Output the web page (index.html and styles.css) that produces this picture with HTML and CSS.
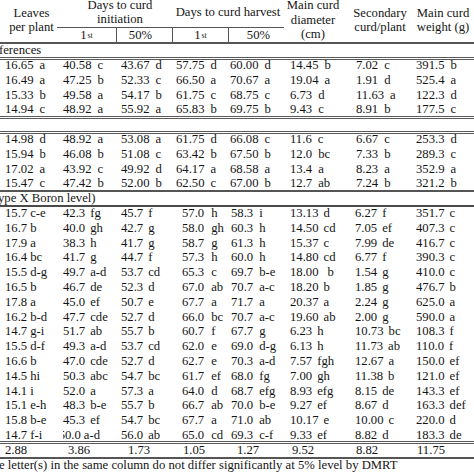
FILE: index.html
```html
<!DOCTYPE html>
<html>
<head>
<meta charset="utf-8">
<title>Table</title>
<link rel="stylesheet" href="styles.css">
</head>
<body>
<div class="page">
  <div class="head">
    <div class="h h-leaves">Leaves<br>per plant</div>
    <div class="h h-init">Days to curd<br>initiation</div>
    <div class="h h-harv">Days to curd harvest</div>
    <div class="h h-diam">Main curd<br>diameter<br>(cm)</div>
    <div class="h h-sec">Secondary<br>curd/plant</div>
    <div class="h h-wt">Main curd<br>weight (g)</div>
    <div class="h sub s-a">1<sup>st</sup></div>
    <div class="h sub s-b">50%</div>
    <div class="h sub s-c">1<sup>st</sup></div>
    <div class="h sub s-d">50%</div>
  </div>
  <div class="rule single"></div>
  <div class="label lab1">ferences</div>
  <div class="rule dbl"></div>

  <div class="row s1"><div>16.65<span class="l">a</span></div><div>40.58<span class="l">c</span></div><div>43.67<span class="l">d</span></div><div>57.75<span class="l">d</span></div><div>60.00<span class="l">d</span></div><div>14.45<span class="l">b</span></div><div>7.02<span class="l">c</span></div><div>391.5<span class="l">b</span></div></div>
  <div class="row s1"><div>16.49<span class="l">a</span></div><div>47.25<span class="l">b</span></div><div>52.33<span class="l">c</span></div><div>66.50<span class="l">a</span></div><div>70.67<span class="l">a</span></div><div>19.04<span class="l">a</span></div><div>1.91<span class="l">d</span></div><div>525.4<span class="l">a</span></div></div>
  <div class="row s1"><div>15.33<span class="l">b</span></div><div>49.58<span class="l">a</span></div><div>54.17<span class="l">b</span></div><div>61.75<span class="l">c</span></div><div>68.75<span class="l">c</span></div><div>6.73<span class="l">d</span></div><div>11.63<span class="l">a</span></div><div>122.3<span class="l">d</span></div></div>
  <div class="row s1"><div>14.94<span class="l">c</span></div><div>48.92<span class="l">a</span></div><div>55.92<span class="l">a</span></div><div>65.83<span class="l">b</span></div><div>69.75<span class="l">b</span></div><div>9.43<span class="l">c</span></div><div>8.91<span class="l">b</span></div><div>177.5<span class="l">c</span></div></div>
  <div class="rule dbl"></div>
  <div class="label"></div>
  <div class="rule dbl"></div>

  <div class="row s1"><div>14.98<span class="l">d</span></div><div>48.92<span class="l">a</span></div><div>53.08<span class="l">a</span></div><div>61.75<span class="l">d</span></div><div>66.08<span class="l">c</span></div><div>11.6<span class="l">c</span></div><div>6.67<span class="l">c</span></div><div>253.3<span class="l">d</span></div></div>
  <div class="row s1"><div>15.94<span class="l">b</span></div><div>46.08<span class="l">b</span></div><div>51.08<span class="l">c</span></div><div>63.42<span class="l">b</span></div><div>67.50<span class="l">b</span></div><div>12.0<span class="l">bc</span></div><div>7.33<span class="l">b</span></div><div>289.3<span class="l">c</span></div></div>
  <div class="row s1"><div>17.02<span class="l">a</span></div><div>43.92<span class="l">c</span></div><div>49.92<span class="l">d</span></div><div>64.17<span class="l">a</span></div><div>68.58<span class="l">a</span></div><div>13.4<span class="l">a</span></div><div>8.23<span class="l">a</span></div><div>352.9<span class="l">a</span></div></div>
  <div class="row s1"><div>15.47<span class="l">c</span></div><div>47.42<span class="l">b</span></div><div>52.00<span class="l">b</span></div><div>62.50<span class="l">c</span></div><div>67.00<span class="l">b</span></div><div>12.7<span class="l">ab</span></div><div>7.24<span class="l">b</span></div><div>321.2<span class="l">b</span></div></div>
  <div class="rule single"></div>
  <div class="label lab2">ype X Boron level)</div>
  <div class="rule single thin"></div>

  <div class="row s3"><div>15.7<span class="l">c-e</span></div><div>42.3<span class="l">fg</span></div><div>45.7<span class="l">f</span></div><div>57.0<span class="l">h</span></div><div>58.3<span class="l">i</span></div><div>13.13<span class="l">d</span></div><div>6.27<span class="l">f</span></div><div>351.7<span class="l">c</span></div></div>
  <div class="row s3"><div>16.7<span class="l">b</span></div><div>40.0<span class="l">gh</span></div><div>42.7<span class="l">g</span></div><div>58.0<span class="l">gh</span></div><div>60.3<span class="l">h</span></div><div>14.50<span class="l">cd</span></div><div>7.05<span class="l">ef</span></div><div>407.3<span class="l">c</span></div></div>
  <div class="row s3"><div>17.9<span class="l">a</span></div><div>38.3<span class="l">h</span></div><div>41.7<span class="l">g</span></div><div>58.7<span class="l">g</span></div><div>61.3<span class="l">h</span></div><div>15.37<span class="l">c</span></div><div>7.99<span class="l">de</span></div><div>416.7<span class="l">c</span></div></div>
  <div class="row s3"><div>16.4<span class="l">bc</span></div><div>41.7<span class="l">g</span></div><div>44.7<span class="l">f</span></div><div>57.3<span class="l">h</span></div><div>60.0<span class="l">h</span></div><div>14.80<span class="l">cd</span></div><div>6.77<span class="l">f</span></div><div>390.3<span class="l">c</span></div></div>
  <div class="row s3"><div>15.5<span class="l">d-g</span></div><div>49.7<span class="l">a-d</span></div><div>53.7<span class="l">cd</span></div><div>65.3<span class="l">c</span></div><div>69.7<span class="l">b-e</span></div><div>18.00<span class="l wide">b</span></div><div>1.54<span class="l">g</span></div><div>410.0<span class="l">c</span></div></div>
  <div class="row s3"><div>16.5<span class="l">b</span></div><div>46.7<span class="l">de</span></div><div>52.3<span class="l">d</span></div><div>67.0<span class="l">ab</span></div><div>70.7<span class="l">a-c</span></div><div>18.20<span class="l">b</span></div><div>1.85<span class="l">g</span></div><div>476.7<span class="l">b</span></div></div>
  <div class="row s3"><div>17.8<span class="l">a</span></div><div>45.0<span class="l">ef</span></div><div>50.7<span class="l">e</span></div><div>67.7<span class="l">a</span></div><div>71.7<span class="l">a</span></div><div>20.37<span class="l">a</span></div><div>2.24<span class="l">g</span></div><div>625.0<span class="l">a</span></div></div>
  <div class="row s3"><div>16.2<span class="l">b-d</span></div><div>47.7<span class="l">cde</span></div><div>52.7<span class="l">d</span></div><div>66.0<span class="l">bc</span></div><div>70.7<span class="l">a-c</span></div><div>19.60<span class="l">ab</span></div><div>2.00<span class="l">g</span></div><div>590.0<span class="l">a</span></div></div>
  <div class="row s3"><div>14.7<span class="l">g-i</span></div><div>51.7<span class="l">ab</span></div><div>55.7<span class="l">b</span></div><div>60.7<span class="l">f</span></div><div>67.7<span class="l">g</span></div><div>6.23<span class="l">h</span></div><div>10.73<span class="l">bc</span></div><div>108.3<span class="l">f</span></div></div>
  <div class="row s3"><div>15.5<span class="l">d-f</span></div><div>49.3<span class="l">a-d</span></div><div>53.7<span class="l">cd</span></div><div>62.0<span class="l">e</span></div><div>69.0<span class="l">d-g</span></div><div>6.13<span class="l">h</span></div><div>11.73<span class="l">ab</span></div><div>110.0<span class="l">f</span></div></div>
  <div class="row s3"><div>16.6<span class="l">b</span></div><div>47.0<span class="l">cde</span></div><div>52.7<span class="l">d</span></div><div>62.7<span class="l">e</span></div><div>70.3<span class="l">a-d</span></div><div>7.57<span class="l">fgh</span></div><div>12.67<span class="l">a</span></div><div>150.0<span class="l">ef</span></div></div>
  <div class="row s3"><div>14.5<span class="l">hi</span></div><div>50.3<span class="l">abc</span></div><div>54.7<span class="l">bc</span></div><div>61.7<span class="l">ef</span></div><div>68.0<span class="l">fg</span></div><div>7.00<span class="l">gh</span></div><div>11.38<span class="l">b</span></div><div>121.0<span class="l">ef</span></div></div>
  <div class="row s3"><div>14.1<span class="l">i</span></div><div>52.0<span class="l">a</span></div><div>57.3<span class="l">a</span></div><div>64.0<span class="l">d</span></div><div>68.7<span class="l">efg</span></div><div>8.93<span class="l">efg</span></div><div>8.15<span class="l">de</span></div><div>143.3<span class="l">ef</span></div></div>
  <div class="row s3"><div>15.1<span class="l">e-h</span></div><div>48.3<span class="l">b-e</span></div><div>55.7<span class="l">b</span></div><div>66.7<span class="l">ab</span></div><div>70.0<span class="l">b-e</span></div><div>9.27<span class="l">ef</span></div><div>8.67<span class="l">d</span></div><div>163.3<span class="l">def</span></div></div>
  <div class="row s3"><div>15.8<span class="l">b-e</span></div><div>45.3<span class="l">ef</span></div><div>54.7<span class="l">bc</span></div><div>67.7<span class="l">a</span></div><div>71.0<span class="l">ab</span></div><div>10.17<span class="l">e</span></div><div>10.00<span class="l">c</span></div><div>220.0<span class="l">d</span></div></div>
  <div class="row s3"><div>14.7<span class="l">f-i</span></div><div><span class="clip">5</span>0.0<span class="l tight">a-d</span></div><div>56.0<span class="l">ab</span></div><div>65.0<span class="l">cd</span></div><div>69.3<span class="l">c-f</span></div><div>9.33<span class="l">ef</span></div><div>8.82<span class="l">d</span></div><div>183.3<span class="l">de</span></div></div>
  <div class="rule dbl"></div>

  <div class="row lsd"><div>2.88</div><div>3.86</div><div>1.73</div><div>1.05</div><div>1.27</div><div>9.52</div><div>8.82</div><div>11.75</div></div>
  <div class="rule single"></div>
  <div class="note">e letter(s) in the same column do not differ significantly at 5% level by DMRT</div>
</div>
</body>
</html>
```

FILE: styles.css
```css
html, body {
  margin: 0;
  padding: 0;
  background: #ffffff;
  overflow: hidden;
}

.page {
  --cols: 57px 59px 56px 56px 56px 66px 60px 64px;
  width: 474px;
  margin-top: -3px;
  font-family: "Liberation Serif", "Times New Roman", serif;
  font-size: 12.7px;
  color: #151515;
}

/* header */
.head {
  display: grid;
  grid-template-columns: var(--cols);
  grid-template-rows: 31px 15.3px;
}

.h {
  display: flex;
  align-items: center;
  justify-content: center;
  text-align: center;
  line-height: 14.5px;
  box-sizing: border-box;
  white-space: nowrap;
}

.h-leaves { grid-column: 1; grid-row: 1 / 3; padding-left: 6px; }
.h-init { grid-column: 2 / 4; grid-row: 1; padding-left: 11px; border-bottom: 1px solid #555; }
.h-harv { grid-column: 4 / 6; grid-row: 1; border-bottom: 1px solid #555; }
.h-diam { grid-column: 6; grid-row: 1 / 3; padding-right: 8px; }
.h-sec { grid-column: 7; grid-row: 1 / 3; }
.h-wt { grid-column: 8; grid-row: 1 / 3; padding-left: 2px; }

.sub { grid-row: 2; }
.s-a { grid-column: 2; }
.s-b { grid-column: 3; border-left: 1px solid #555; padding-right: 8px; }
.s-c { grid-column: 4; border-left: 1px solid #555; }
.s-d { grid-column: 5; border-left: 1px solid #555; padding-left: 4px; }

sup {
  font-size: 0.62em;
  vertical-align: 0.55em;
  line-height: 0;
  margin-left: 1px;
}

/* horizontal rules (overlay the row boundary, take no space) */
.rule {
  position: relative;
  z-index: 1;
  box-sizing: border-box;
}
.rule.dbl {
  height: 3px;
  margin: -1.5px 0;
  border-top: 1px solid #5a5a5a;
  border-bottom: 1px solid #5a5a5a;
}
.rule.single {
  height: 2px;
  margin: -1px 0;
  background: #555;
}
.rule.single.thin {
  height: 1.5px;
  margin: -0.75px 0;
  background: #4a4a4a;
}

/* rows */
.label,
.note {
  height: 14.8px;
  line-height: 14.8px;
  white-space: nowrap;
}
.lab1 { margin-left: -1px; }
.lab2 { margin-left: -2px; }
.note { margin-left: -1px; }

.row {
  display: grid;
  grid-template-columns: var(--cols);
  height: 14.8px;
  line-height: 14.8px;
  white-space: nowrap;
}

.l { margin-left: 6px; }

/* section 1 & 2 offsets */
.s1 > div:nth-child(1) { padding-left: 5px; }
.s1 > div:nth-child(2) { padding-left: 6px; }
.s1 > div:nth-child(3) { padding-left: 5px; }
.s1 > div:nth-child(4) { padding-left: 4px; }
.s1 > div:nth-child(5) { padding-left: 2px; }
.s1 > div:nth-child(6) { padding-left: 6px; }
.s1 > div:nth-child(7) { padding-left: 6px; }
.s1 > div:nth-child(8) { padding-left: 6px; }

/* section 3 offsets */
.s3 .l { margin-left: 5px; }
.s3 > div:nth-child(1) { padding-left: 5px; }
.s3 > div:nth-child(1) .l { margin-left: 3px; }
.s3 > div:nth-child(2) { padding-left: 6px; }
.s3 > div:nth-child(3) { padding-left: 5px; }
.s3 > div:nth-child(4) { padding-left: 10px; }
.s3 > div:nth-child(4) .l { margin-left: 7px; }
.s3 > div:nth-child(5) { padding-left: 3px; }
.s3 > div:nth-child(5) .l { margin-left: 6px; }
.s3 > div:nth-child(6) { padding-left: 6px; }
.s3 > div:nth-child(7) { padding-left: 5px; }
.s3 > div:nth-child(8) { padding-left: 6px; }
.s3 .l.wide { margin-left: 9px; }
.s3 .l.tight { margin-left: 3px; }

.clip {
  display: inline-block;
  width: 2px;
  overflow: hidden;
  direction: rtl;
  vertical-align: top;
  height: 14.8px;
}

/* LSD row */
.lsd > div:nth-child(1) { padding-left: 5px; }
.lsd > div:nth-child(2) { padding-left: 11px; }
.lsd > div:nth-child(3) { padding-left: 12px; }
.lsd > div:nth-child(4) { padding-left: 11px; }
.lsd > div:nth-child(5) { padding-left: 9px; }
.lsd > div:nth-child(6) { padding-left: 8px; }
.lsd > div:nth-child(7) { padding-left: 6px; }
.lsd > div:nth-child(8) { padding-left: 7px; }
```
